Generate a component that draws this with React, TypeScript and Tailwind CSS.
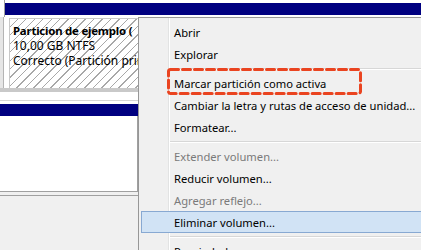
import React from 'react';

type Item = { label?: string; disabled?: boolean; active?: boolean; sep?: boolean };

const items: Item[] = [
  { label: 'Abrir' },
  { label: 'Explorar' },
  { sep: true },
  { label: 'Marcar partición como activa' },
  { label: 'Cambiar la letra y rutas de acceso de unidad...' },
  { label: 'Formatear...' },
  { sep: true },
  { label: 'Extender volumen...', disabled: true },
  { label: 'Reducir volumen...' },
  { label: 'Agregar reflejo...', disabled: true },
  { label: 'Eliminar volumen...', active: true },
  { sep: true },
  { label: 'Propiedades' },
];

function ContextMenu() {
  return (
    <div className="absolute left-[138px] top-[17px] w-[300px] h-[260px] bg-[#f0f0f0] border-l border-t border-[#979797] pt-[3px] text-[11.2px]">
      {/* gutter line */}
      <div className="absolute left-[29px] top-0 bottom-0 w-px bg-[#e2e3e3]" />
      <div className="absolute left-[30px] top-0 bottom-0 w-px bg-white" />
      <div className="relative flex flex-col">
        {items.map((it, i) =>
          it.sep ? (
            <div key={i} className="h-[7px] flex items-center pl-[31px]">
              <div className="w-full border-t border-[#d7d7d7] border-b border-b-white" />
            </div>
          ) : (
            <div
              key={i}
              className={
                it.active
                  ? 'h-[22px] ml-[2px] pl-[32px] flex items-center bg-[#d1e3f5] border border-[#88a9d2] text-black whitespace-nowrap'
                  : it.disabled
                  ? 'h-[22px] pl-[35px] flex items-center text-[#7a7a7a] whitespace-nowrap'
                  : 'h-[22px] pl-[35px] flex items-center text-black whitespace-nowrap'
              }
            >
              {it.label}
            </div>
          )
        )}
      </div>
      {/* annotation around "Marcar partición como activa" */}
      <svg className="absolute left-[28px] top-[50px]" width="196" height="27" viewBox="0 0 196 27">
        <rect
          x="1.5"
          y="1.5"
          width="192"
          height="24"
          rx="2"
          fill="none"
          stroke="#ea4420"
          strokeWidth="3"
          strokeDasharray="8 4"
          strokeLinecap="round"
        />
      </svg>
    </div>
  );
}

export default function App() {
  return (
    <div
      className="relative w-[421px] h-[250px] overflow-hidden bg-[#f0f0f0] text-[12px] leading-[15px]"
      style={{ fontFamily: '"Noto Sans", "Open Sans", sans-serif' }}
    >
      <div className="flex flex-col w-[421px]">
        {/* top volume header */}
        <div className="flex h-[17px] bg-white">
          <div className="w-[5px] border-r border-[#a0a0a0]" />
          <div className="flex-1 flex flex-col pt-[3px]">
            <div className="h-[12px] bg-[#000080]" />
          </div>
        </div>
        {/* disk row */}
        <div className="flex h-[71px] bg-white">
          <div className="w-[4px] bg-[#e6e6e6] border-r border-[#b4b4b4]" />
          <div className="w-[5px]" />
          <div className="w-[129px] overflow-hidden mt-[1px] border-t border-l border-[#c8c8c8] bg-[repeating-linear-gradient(135deg,#ffffff_0px,#ffffff_5px,#a8a8a8_5px,#a8a8a8_6px)] pl-[3px] pt-[4px] text-black whitespace-nowrap">
            <div className="font-bold text-[11.4px] tracking-[-0.2px]">Particion de ejemplo  (</div>
            <div>10,00 GB NTFS</div>
            <div>Correcto (Partición primaria)</div>
          </div>
          <div className="flex-1" />
        </div>
        {/* lower left pane */}
        <div className="w-[138px] flex flex-col">
          <div className="h-[4px] bg-[#c9c9c9]" />
          <div className="h-[8px] bg-white" />
          <div className="h-[1px] bg-[#d6d6d6]" />
          <div className="h-[3px] bg-white" />
          <div className="h-[12px] bg-[#000080]" />
          <div className="h-[75px] bg-white border-r border-[#a0a0a0]" />
          <div className="h-[1px] bg-[#a0a0a0]" />
          <div className="h-[3px] bg-[#f0f0f0]" />
          <div className="h-[1px] bg-[#a0a0a0]" />
        </div>
      </div>
      <ContextMenu />
    </div>
  );
}
